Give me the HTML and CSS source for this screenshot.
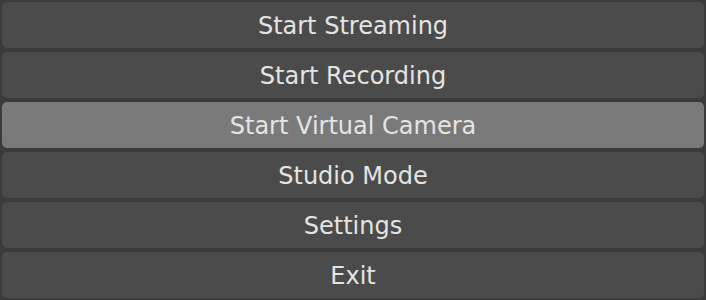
FILE: index.html
```html
<!DOCTYPE html>
<html lang="en">
<head>
    <meta charset="UTF-8">
    <title>Menu</title>
    <link rel="stylesheet" href="styles.css">
</head>
<body>
    <div class="menu">
        <button class="menu-btn">Start Streaming</button>
        <button class="menu-btn">Start Recording</button>
        <button class="menu-btn hover">Start Virtual Camera</button>
        <button class="menu-btn">Studio Mode</button>
        <button class="menu-btn">Settings</button>
        <button class="menu-btn">Exit</button>
    </div>
</body>
</html>
```

FILE: styles.css
```css
body, html {
    margin: 0;
    padding: 0;
    background: #3b3b3b;
    font-family: 'DejaVu Sans', sans-serif;
}
.menu {
    display: flex;
    flex-direction: column;
    gap: 4px;
    padding: 2px;
}
.menu-btn {
    height: 46px;
    border: none;
    border-radius: 5px;
    background: #4b4b4b;
    color: #e4e4e4;
    font-family: inherit;
    font-size: 24px;
    padding: 2px 0 0;
}
.menu-btn.hover {
    background: #7a7a7a;
}
```
